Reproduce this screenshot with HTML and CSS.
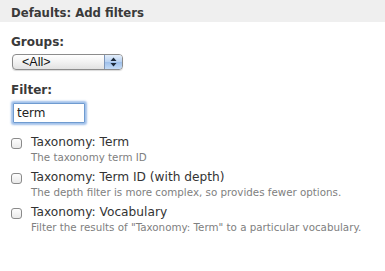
FILE: index.html
```html
<!DOCTYPE html>
<html>
<head>
<meta charset="utf-8">
<link rel="stylesheet" href="styles.css">
</head>
<body>
<div class="header">Defaults: Add filters</div>
<div class="content">
  <div class="label label-groups">Groups:</div>
  <div class="select">
    <span class="select-value">&lt;All&gt;</span>
    <span class="stepper">
      <svg width="7" height="10" viewBox="0 0 7 10"><path d="M3.5 0.5 L6.5 4 L0.5 4 Z M0.5 6 L6.5 6 L3.5 9.5 Z" fill="#1d2a3a"/></svg>
    </span>
  </div>
  <div class="label label-filter">Filter:</div>
  <div class="input-wrap"><input class="text-input" type="text" value="term"></div>
  <div class="options">
    <div class="option">
      <div class="option-title"><span class="checkbox"></span>Taxonomy: Term</div>
      <div class="option-desc">The taxonomy term ID</div>
    </div>
    <div class="option">
      <div class="option-title"><span class="checkbox"></span>Taxonomy: Term ID (with depth)</div>
      <div class="option-desc">The depth filter is more complex, so provides fewer options.</div>
    </div>
    <div class="option">
      <div class="option-title"><span class="checkbox"></span>Taxonomy: Vocabulary</div>
      <div class="option-desc">Filter the results of "Taxonomy: Term" to a particular vocabulary.</div>
    </div>
  </div>
</div>
</body>
</html>
```
FILE: styles.css
```css
html, body {
  margin: 0;
  padding: 0;
  background: #fff;
}
body {
  font-family: "DejaVu Sans", Verdana, sans-serif;
  color: #333;
  width: 385px;
  height: 271px;
  overflow: hidden;
}
.header {
  height: 22px;
  box-sizing: border-box;
  padding: 6px 11px 2px;
  line-height: 14px;
  font-size: 11.7px;
  font-weight: bold;
  background: #efefef;
  color: #3a3a3a;
}
.content {
  padding: 0 11px;
}
.label {
  font-size: 12px;
  font-weight: bold;
  line-height: 14px;
  color: #3a3a3a;
}
.label-groups {
  margin-top: 13px;
}
.select {
  margin: 5px 0 0 1px;
  width: 111px;
  height: 16px;
  box-sizing: border-box;
  border: 1px solid #8c8c8c;
  border-radius: 4px;
  background: linear-gradient(#ffffff, #f2f2f2 50%, #e2e2e2);
  display: flex;
  align-items: center;
  overflow: hidden;
  box-shadow: 0 1px 1px rgba(0,0,0,0.15);
}
.select-value {
  flex: 1;
  font-family: "Liberation Sans", Arial, sans-serif;
  font-size: 12.5px;
  line-height: 14px;
  padding-left: 9px;
  color: #111;
}
.stepper {
  width: 17px;
  height: 14px;
  border-left: 1px solid #7d95b8;
  background: linear-gradient(#e3eefb, #b7d0f0 50%, #9dbfea 51%, #c4dbf6);
  display: flex;
  align-items: center;
  justify-content: center;
}
.stepper svg {
  display: block;
}
.label-filter {
  margin-top: 13px;
}
.input-wrap {
  margin-top: 4px;
  padding: 2px 0 0 2px;
}
.text-input {
  display: block;
  margin: 0;
  width: 72px;
  height: 20px;
  box-sizing: border-box;
  border: 1px solid #6f9bd0;
  padding: 0 3px;
  font-family: "DejaVu Sans", Verdana, sans-serif;
  font-size: 12px;
  color: #222;
  outline: none;
  box-shadow: 0 0 2px 2px rgba(120, 165, 225, 0.7);
  border-radius: 1px;
}
.options {
  margin-top: 11px;
}
.option {
  margin-bottom: 5px;
}
.option-title {
  display: flex;
  align-items: center;
  font-size: 12.2px;
  line-height: 16px;
  color: #333;
}
.checkbox {
  width: 11px;
  height: 11px;
  box-sizing: border-box;
  border: 1px solid #8a8a8a;
  border-radius: 3px;
  background: linear-gradient(#fdfdfd, #e9e9e9);
  margin-right: 9px;
  margin-top: 3px;
  flex: none;
}
.option-desc {
  padding-left: 20px;
  font-size: 10.3px;
  line-height: 14px;
  color: #808080;
}
```
